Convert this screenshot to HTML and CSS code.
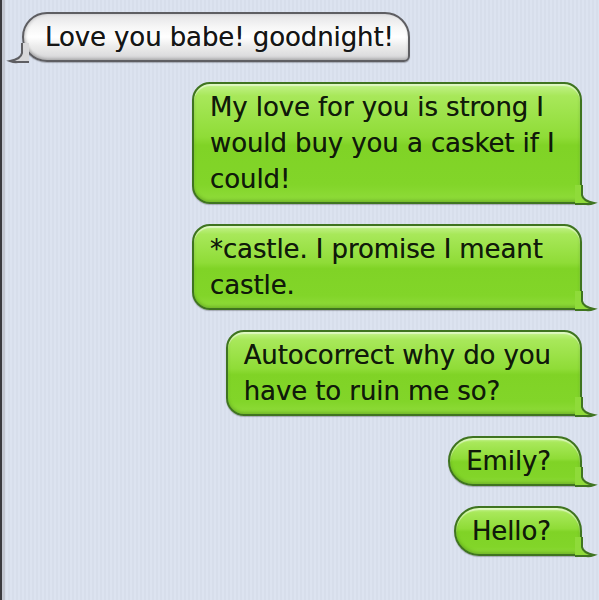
FILE: index.html
```html
<!DOCTYPE html>
<html lang="en">
<head>
  <meta charset="UTF-8">
  <meta name="viewport" content="width=device-width, initial-scale=1.0">
  <title>Messages</title>
  <link rel="stylesheet" href="styles.css">
</head>
<body>

  <div class="thread">

    <!-- Received -->
    <div class="bubble received single">
      Love you babe! goodnight!
      <svg class="tail" viewBox="0 0 20 20"><path class="tailFill" d="M0 0 L7 0 L7 10 Q8 16 19 18 Q15 19.5 11 19 L0 19 Z"/><path class="tailLine" d="M7 0 L7 10 Q8 16 19 18 Q15 19.5 11 19 L0 19"/></svg>
    </div>

    <!-- Sent -->
    <div class="bubble sent full">
      My love for you is strong I<br>would buy you a casket if I<br>could!
      <svg class="tail" viewBox="0 0 20 20"><path class="tailFill" d="M0 0 L7 0 L7 10 Q8 16 19 18 Q15 19.5 11 19 L0 19 Z"/><path class="tailLine" d="M7 0 L7 10 Q8 16 19 18 Q15 19.5 11 19 L0 19"/></svg>
    </div>

    <div class="bubble sent full">
      *castle. I promise I meant<br>castle.
      <svg class="tail" viewBox="0 0 20 20"><path class="tailFill" d="M0 0 L7 0 L7 10 Q8 16 19 18 Q15 19.5 11 19 L0 19 Z"/><path class="tailLine" d="M7 0 L7 10 Q8 16 19 18 Q15 19.5 11 19 L0 19"/></svg>
    </div>

    <div class="bubble sent">
      Autocorrect why do you<br>have to ruin me so?
      <svg class="tail" viewBox="0 0 20 20"><path class="tailFill" d="M0 0 L7 0 L7 10 Q8 16 19 18 Q15 19.5 11 19 L0 19 Z"/><path class="tailLine" d="M7 0 L7 10 Q8 16 19 18 Q15 19.5 11 19 L0 19"/></svg>
    </div>

    <div class="bubble sent single">
      Emily?
      <svg class="tail" viewBox="0 0 20 20"><path class="tailFill" d="M0 0 L7 0 L7 10 Q8 16 19 18 Q15 19.5 11 19 L0 19 Z"/><path class="tailLine" d="M7 0 L7 10 Q8 16 19 18 Q15 19.5 11 19 L0 19"/></svg>
    </div>

    <div class="bubble sent single">
      Hello?
      <svg class="tail" viewBox="0 0 20 20"><path class="tailFill" d="M0 0 L7 0 L7 10 Q8 16 19 18 Q15 19.5 11 19 L0 19 Z"/><path class="tailLine" d="M7 0 L7 10 Q8 16 19 18 Q15 19.5 11 19 L0 19"/></svg>
    </div>

  </div>

</body>
</html>
```

FILE: styles.css
```css
/* Page with the pinstriped message background */
body {
  margin: 0;
  min-height: 600px;
  font-family: 'DejaVu Sans', 'Liberation Sans', sans-serif;
  background: repeating-linear-gradient(90deg, #d7deeb 0 2px, #dce3f0 2px 4px);
  border-left: 2px solid #3a3a3e;
  box-shadow: inset 3px 0 0 #c2c6d0;
}

.thread {
  display: flex;
  flex-direction: column;
  gap: 20px;
  padding: 12px 17px 0 20px;
}

/* Message bubbles */
.bubble {
  position: relative;
  box-sizing: border-box;
  font-size: 26px;
  line-height: 36px;
  letter-spacing: -0.1px;
  white-space: nowrap;
  color: #101a0a;
  text-shadow: 0 0 0.6px rgba(16, 26, 10, 0.6);
  padding: 5px 29px 5px 16px;
  border-radius: 18px;
  border-bottom-right-radius: 4px;
}

.bubble.full {
  width: 390px;
}

.bubble.single {
  border-radius: 25px;
  border-bottom-right-radius: 6px;
}

.sent {
  align-self: flex-end;
  border: 2px solid #3f7420;
  background: linear-gradient(to bottom, #c3f28c 0%, #a8e85a 10%, #8fdc37 45%, #80d326 52%, #82d529 85%, #90dc3b 100%);
  box-shadow: inset 0 2px 1px rgba(255, 255, 255, 0.5), inset 0 -2px 3px rgba(60, 120, 10, 0.35), 0 1px 1px rgba(0, 0, 0, 0.25);
}

.received {
  align-self: flex-start;
  padding: 5px 14px 5px 21px;
  border: 2px solid #5e5e62;
  border-bottom-right-radius: 25px;
  border-bottom-left-radius: 6px;
  background: linear-gradient(to bottom, #e4e4e6 0%, #f7f7f7 30%, #ffffff 50%, #ececec 70%, #d6d6d8 100%);
  box-shadow: inset 2px 0 3px rgba(0, 0, 0, 0.12), inset 0 -2px 3px rgba(0, 0, 0, 0.15), 0 1px 1px rgba(0, 0, 0, 0.25);
  color: #151515;
}

/* Little tail at the bottom corner */
.tail {
  position: absolute;
  width: 20px;
  height: 20px;
  right: -15px;
  bottom: -3px;
  overflow: visible;
}

.received .tail {
  right: auto;
  left: -15px;
  transform: scaleX(-1);
}

.tailFill {
  fill: #8fdb3a;
}

.tailLine {
  fill: none;
  stroke: #3f7420;
  stroke-width: 2;
}

.received .tailFill {
  fill: #d8d8da;
}

.received .tailLine {
  stroke: #5e5e62;
}
```
